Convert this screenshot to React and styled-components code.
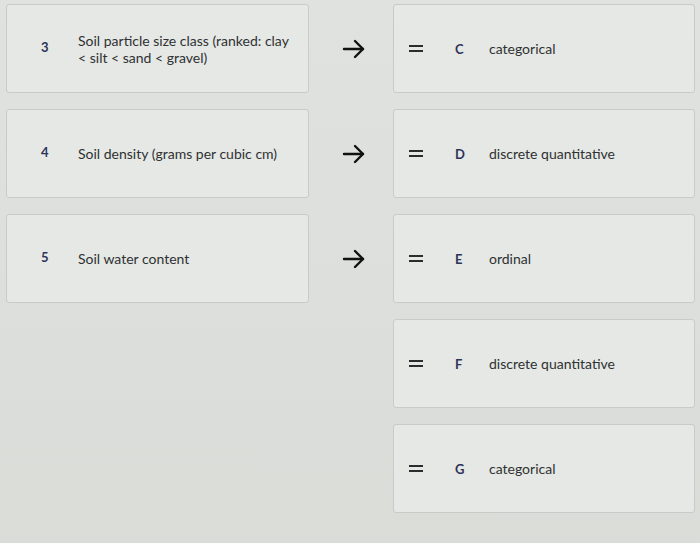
import React from "react";
import styled, { createGlobalStyle } from "styled-components";

const Global = createGlobalStyle`
  html, body { margin: 0; padding: 0; background: #dcdfdb; }
  body { font-family: "Source Sans Pro", Lato, "Noto Sans", sans-serif; }
`;

const Page = styled.div`
  width: 700px;
  height: 543px;
  box-sizing: border-box;
  padding: 4px 5px 0 6px;
  display: grid;
  grid-template-columns: 303px 84px 302px;
  grid-auto-rows: 89px;
  row-gap: 16px;
  background: linear-gradient(180deg, #dfe2de 0%, #dadcd8 100%);
`;

const Card = styled.div`
  box-sizing: border-box;
  background: #e5e8e4;
  border: 1px solid #c8cbc7;
  border-radius: 3px;
  display: flex;
  align-items: center;
  padding-left: ${(p) => p.$pad}px;
  grid-column: ${(p) => p.$col};
`;

const Num = styled.span`
  width: 37px;
  flex: none;
  font-weight: 700;
  font-size: 13px;
  color: #2e3459;
  margin-top: -3px;
`;

const Label = styled.span`
  font-size: 14px;
  line-height: 17px;
  color: #2f3133;
  max-width: 216px;
`;

const ArrowCell = styled.div`
  grid-column: 2;
  display: flex;
  align-items: center;
  justify-content: center;
  padding-left: 6px;
`;

const Handle = styled.span`
  width: 14px;
  flex: none;
  display: flex;
  flex-direction: column;
  gap: 3px;
  margin-right: 32px;
  & > i {
    display: block;
    height: 2px;
    background: #2a2c2e;
  }
`;

const Letter = styled.span`
  width: 34px;
  flex: none;
  font-weight: 700;
  font-size: 13px;
  color: #2e3459;
`;

const Arrow = () => (
  <svg width="24" height="20" viewBox="0 0 24 20" fill="none" stroke="#111" strokeWidth="2.4" strokeLinecap="round" strokeLinejoin="round">
    <path d="M2 10 H21" />
    <path d="M13 2 L21 10 L13 18" />
  </svg>
);

const left = [
  { n: "3", t: "Soil particle size class (ranked: clay < silt < sand <  gravel)" },
  { n: "4", t: "Soil density (grams per cubic cm)" },
  { n: "5", t: "Soil water content" },
];

const right = [
  { l: "C", t: "categorical" },
  { l: "D", t: "discrete quantitative" },
  { l: "E", t: "ordinal" },
  { l: "F", t: "discrete quantitative" },
  { l: "G", t: "categorical" },
];

export default function App() {
  return (
    <>
      <Global />
      <Page>
        {right.map((r, i) => (
          <React.Fragment key={r.l}>
            {left[i] ? (
              <>
                <Card $col={1} $pad={34}>
                  <Num>{left[i].n}</Num>
                  <Label>{left[i].t}</Label>
                </Card>
                <ArrowCell>
                  <Arrow />
                </ArrowCell>
              </>
            ) : null}
            <Card $col={3} $pad={15}>
              <Handle>
                <i />
                <i />
              </Handle>
              <Letter>{r.l}</Letter>
              <Label>{r.t}</Label>
            </Card>
          </React.Fragment>
        ))}
      </Page>
    </>
  );
}
